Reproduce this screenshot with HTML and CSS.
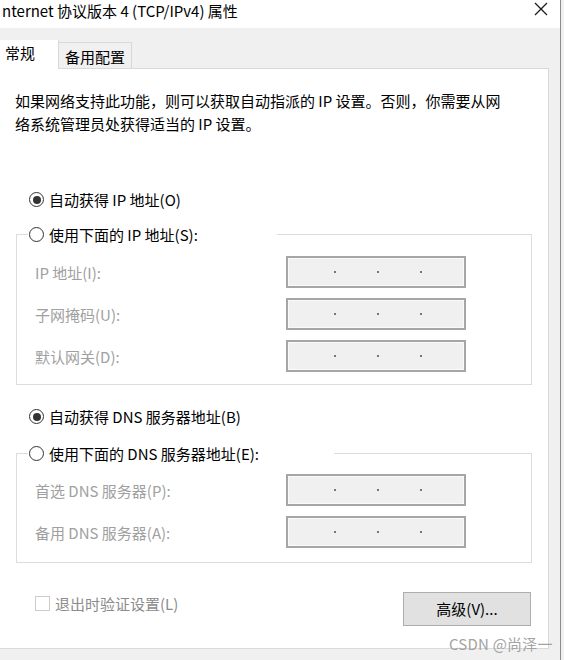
FILE: index.html
```html
<!DOCTYPE html>
<html lang="zh-CN">
<head>
<meta charset="utf-8">
<title>Internet 协议版本 4 (TCP/IPv4) 属性</title>
<link rel="stylesheet" href="styles.css">
</head>
<body>
<div class="window">
	<div class="titlebar">
		<span class="title">nternet 协议版本 4 (TCP/IPv4) 属性</span>
		<svg class="close" width="14" height="14" viewBox="0 0 14 14">
			<path d="M1 1 L13 13 M13 1 L1 13" stroke="#1a1a1a" stroke-width="1.3" fill="none"/>
		</svg>
	</div>

	<div class="tabs">
		<div class="tab active">常规</div>
		<div class="tab">备用配置</div>
		<div class="tab-fill"></div>
	</div>

	<div class="panel">
		<p class="intro">如果网络支持此功能，则可以获取自动指派的 IP 设置。否则，你需要从网<br>络系统管理员处获得适当的 IP 设置。</p>

		<div class="radio-row first-radio">
			<span class="radio checked"></span>
			<span>自动获得 IP 地址(O)</span>
		</div>

		<fieldset class="group">
			<legend class="legend-ip">
				<span class="radio-row"><span class="radio"></span><span>使用下面的 IP 地址(S):</span></span>
			</legend>
			<div class="fields">
				<span class="field-label">IP 地址(I):</span>
				<div class="ip-box"><i></i><i></i><i></i></div>
				<span class="field-label">子网掩码(U):</span>
				<div class="ip-box"><i></i><i></i><i></i></div>
				<span class="field-label">默认网关(D):</span>
				<div class="ip-box"><i></i><i></i><i></i></div>
			</div>
		</fieldset>

		<div class="radio-row dns-radio">
			<span class="radio checked"></span>
			<span>自动获得 DNS 服务器地址(B)</span>
		</div>

		<fieldset class="group group-dns">
			<legend class="legend-dns">
				<span class="radio-row"><span class="radio"></span><span>使用下面的 DNS 服务器地址(E):</span></span>
			</legend>
			<div class="fields">
				<span class="field-label">首选 DNS 服务器(P):</span>
				<div class="ip-box"><i></i><i></i><i></i></div>
				<span class="field-label">备用 DNS 服务器(A):</span>
				<div class="ip-box"><i></i><i></i><i></i></div>
			</div>
		</fieldset>

		<div class="footer">
			<div class="check-row">
				<span class="checkbox"></span>
				<span>退出时验证设置(L)</span>
			</div>
			<div class="button">高级(V)...</div>
		</div>
	</div>

	<div class="watermark">CSDN @尚泽一</div>
</div>
</body>
</html>
```

FILE: styles.css
```css
* {
	box-sizing: border-box;
}
body {
	margin: 0;
	background: #f0f0f0;
	font-family: "Noto Sans CJK SC", "Noto Sans", sans-serif;
	font-size: 15px;
	color: #000;
}
.window {
	position: relative;
	width: 561px;
	height: 660px;
	background: #f0f0f0;
	border-right: 1px solid #8c8c8c;
	display: flex;
	flex-direction: column;
}
.titlebar {
	height: 28px;
	background: #fff;
	display: flex;
	justify-content: space-between;
	align-items: flex-start;
	padding-left: 2px;
	padding-right: 12px;
}
.title {
	line-height: 22px;
}
.close {
	margin-top: 2px;
}
.tabs {
	height: 41px;
	display: flex;
	align-items: flex-end;
	padding-right: 11px;
}
.tab {
	height: 27px;
	padding: 0 6px 0 6px;
	line-height: 27px;
	border: 1px solid #d9d9d9;
	border-left: none;
	background: #f0f0f0;
}
.tab.active {
	height: 29px;
	width: 59px;
	padding-left: 5px;
	line-height: 26px;
	background: #fff;
	border-top: none;
	border-bottom: none;
}
.tab-fill {
	flex: 1;
	border-bottom: 1px solid #d9d9d9;
	border-right: 1px solid #d9d9d9;
	height: 1px;
}
.panel {
	height: 580px;
	margin-right: 11px;
	background: #fff;
	border-right: 1px solid #d9d9d9;
	border-bottom: 1px solid #d9d9d9;
	padding-top: 20px;
}
.intro {
	margin: 0;
	padding-left: 15px;
	line-height: 23px;
}
.radio-row {
	display: flex;
	align-items: center;
	gap: 5px;
	height: 23px;
	line-height: 23px;
	white-space: nowrap;
}
.first-radio {
	margin-top: 53px;
	padding-left: 29px;
}
.dns-radio {
	margin-top: 20px;
	padding-left: 29px;
}
.radio {
	width: 15px;
	height: 15px;
	border: 1px solid #333;
	border-radius: 50%;
	background: #fff;
	display: flex;
	align-items: center;
	justify-content: center;
	flex-shrink: 0;
}
.radio.checked::after {
	content: "";
	width: 8px;
	height: 8px;
	border-radius: 50%;
	background: #333;
}
.group {
	margin: 12px 16px 0 16px;
	padding: 0 0 12px 11px;
	border: 1px solid #dcdcdc;
	min-inline-size: 0;
}
.group-dns {
	margin-top: 14px;
	padding-bottom: 14px;
}
.group legend {
	padding: 0;
	padding-left: 1px;
	background: #fff;
}
.legend-ip {
	width: 249px;
}
.legend-dns {
	width: 306px;
}
.fields {
	display: grid;
	grid-template-columns: 251px 180px;
	row-gap: 10px;
	padding-left: 7px;
	padding-top: 10px;
	align-items: center;
}
.group-dns .fields {
	padding-top: 9px;
}
.field-label {
	color: #a0a0a0;
}
.ip-box {
	height: 32px;
	border: 2px solid #a6a6a6;
	box-shadow: inset 0 0 0 1px #fafafa;
	background: #f0f0f0;
	display: flex;
	align-items: center;
	padding-left: 46px;
	gap: 41px;
}
.ip-box i {
	width: 2px;
	height: 2px;
	background: #6f7592;
}
.footer {
	margin-top: 29px;
	display: flex;
	justify-content: space-between;
	align-items: flex-start;
	padding-left: 35px;
	padding-right: 17px;
}
.check-row {
	display: flex;
	align-items: center;
	gap: 5px;
	height: 23px;
	color: #8c8c8c;
}
.checkbox {
	width: 15px;
	height: 15px;
	border: 1px solid #cccccc;
	background: #fff;
}
.button {
	width: 128px;
	height: 34px;
	line-height: 32px;
	text-align: center;
	background: #e1e1e1;
	border: 1px solid #adadad;
}
.watermark {
	position: absolute;
	left: 449px;
	top: 633px;
	color: #a3a3a3;
	line-height: 22px;
	letter-spacing: 0.2px;
}
```
